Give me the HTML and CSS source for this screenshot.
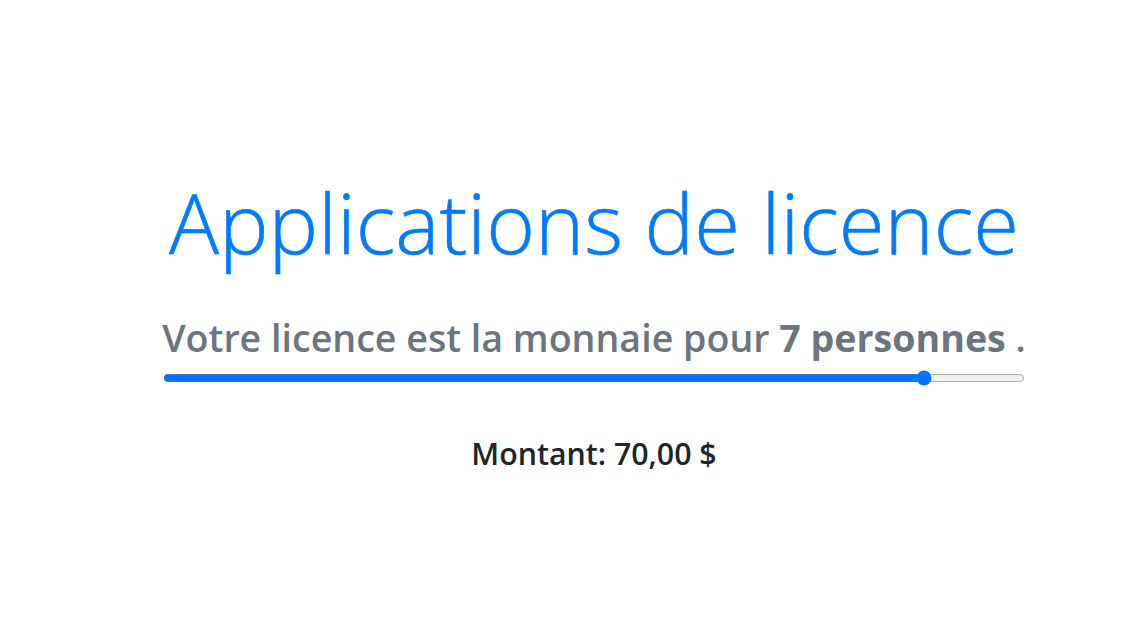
FILE: index.html
```html
<!DOCTYPE html>
<html lang="fr">
<head>
<meta charset="utf-8">
<title>Applications de licence</title>
<link rel="stylesheet" href="styles.css">
</head>
<body>
<main class="page">
  <section class="panel">
    <h1 class="title">Applications de licence</h1>
    <div class="picker">
      <h2 class="lead">Votre licence est la monnaie pour <strong>7 personnes</strong> .</h2>
      <input class="slider" type="range" min="0" max="100" value="89" step="any">
    </div>
    <p class="amount">Montant: 70,00 $</p>
  </section>
</main>
</body>
</html>
```
FILE: styles.css
```css
html, body {
  margin: 0;
  padding: 0;
  background: #ffffff;
}
body {
  font-family: "Open Sans", "Noto Sans", "Liberation Sans", sans-serif;
}
.page {
  display: flex;
  justify-content: center;
  padding: 172px 0 0 55px;
}
.panel {
  display: flex;
  flex-direction: column;
  align-items: center;
}
.title {
  margin: 0;
  font-size: 83.3px;
  font-weight: 300;
  line-height: 1.21;
  color: #007bff;
  -webkit-text-stroke: 0.6px #007bff;
}
.picker {
  display: flex;
  flex-direction: column;
  align-items: center;
  width: 862px;
  margin-top: 43px;
}
.lead {
  margin: 0;
  font-size: 37.6px;
  font-weight: 600;
  line-height: 1.18;
  color: #6c757d;
  white-space: nowrap;
}
.lead strong {
  font-weight: 700;
}
.slider {
  width: 100%;
  margin: 10px 0 0 0;
}
.amount {
  margin: 50px 0 0 0;
  font-size: 30.3px;
  font-weight: 600;
  line-height: 1.2;
  color: #212529;
}
```
